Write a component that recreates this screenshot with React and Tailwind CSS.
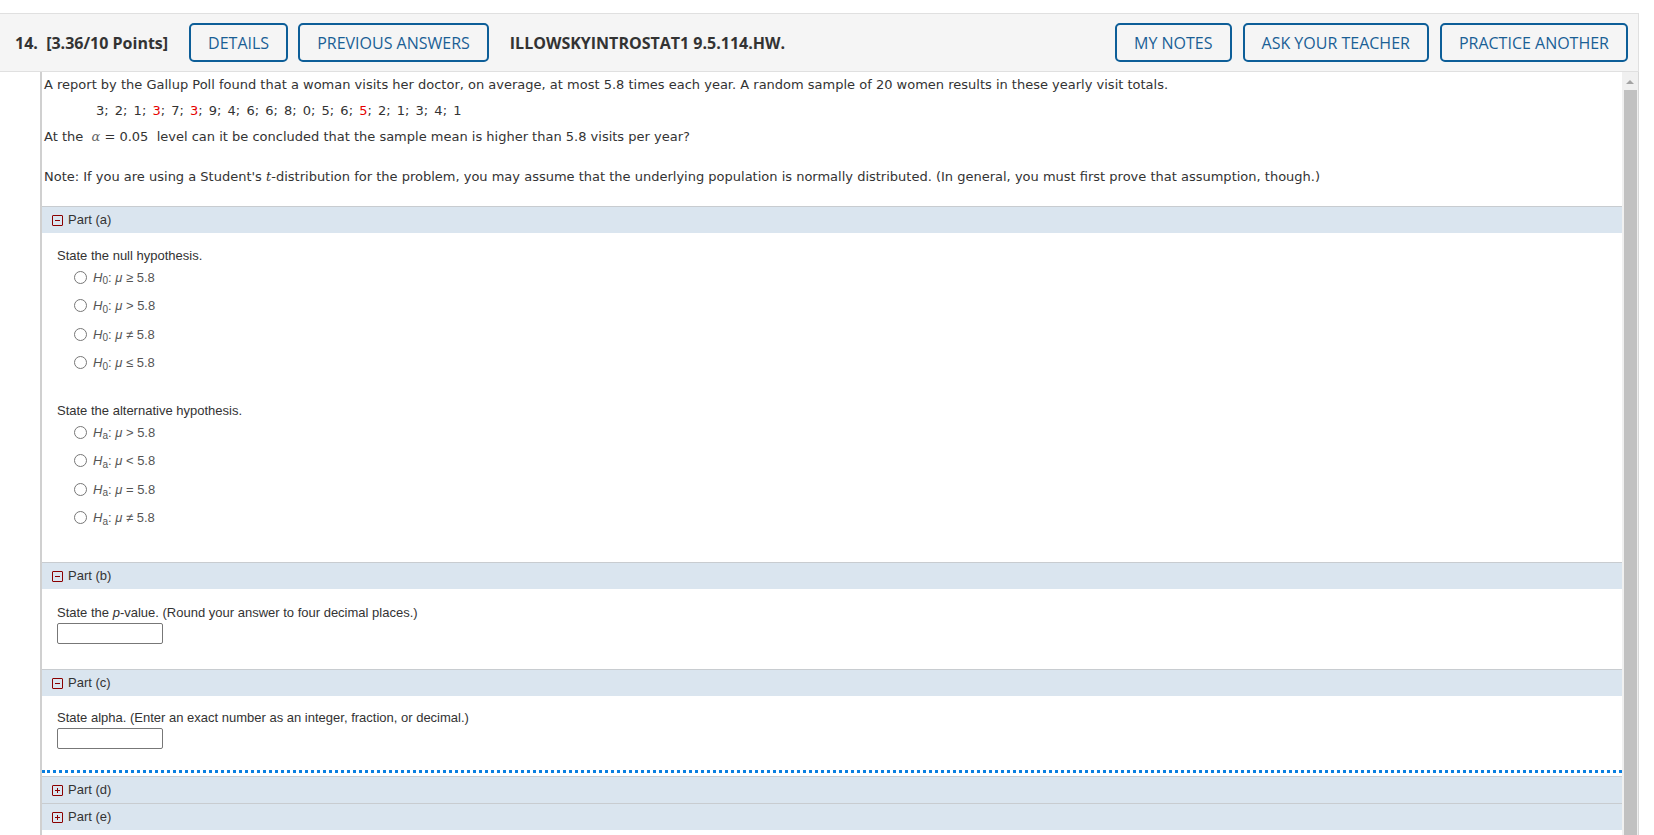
import React from "react";

const body = { fontFamily: "'DejaVu Sans', Verdana, sans-serif" };
const arial = { fontFamily: "'Liberation Sans', Arial, sans-serif" };
const open = { fontFamily: "'Open Sans', sans-serif" };

const HeadButton = ({ children }) => (
  <button
    className="h-[39px] px-[17px] border-2 border-[#0d5e98] rounded-[5px] text-[#1a5f95] text-[16px] font-medium uppercase leading-none bg-transparent"
    style={open}
  >
    {children}
  </button>
);

const Toggle = ({ open: isOpen }) => (
  <span className="relative w-[11px] h-[11px] border border-[#8b0000] rounded-[1px] flex items-center justify-center">
    <span className="absolute w-[5px] h-[1px] bg-[#8b0000]" />
    {!isOpen && <span className="absolute w-[1px] h-[5px] bg-[#8b0000]" />}
  </span>
);

const PartBar = ({ label, isOpen = true, className = "" }) => (
  <div
    className={`h-[27px] bg-[#dae5ef] border-t border-[#c8ccd0] flex items-center pl-[10px] gap-[5px] ${className}`}
  >
    <Toggle open={isOpen} />
    <span className="text-[13px] text-[#333]" style={arial}>
      {label}
    </span>
  </div>
);

const Option = ({ sub, rel }) => (
  <div className="h-[28.5px] flex items-center pl-[17px] gap-[6px]">
    <span className="w-[13px] h-[13px] rounded-full border border-[#777] bg-white" />
    <span className="text-[13px] text-[#555]" style={arial}>
      <i>H</i>
      <sub className="text-[10px]">{sub}</sub>
      : <i>μ</i> {rel} 5.8
    </span>
  </div>
);

const nullOptions = ["≥", ">", "≠", "≤"];
const altOptions = [">", "<", "=", "≠"];

const data = [3, 2, 1, 3, 7, 3, 9, 4, 6, 6, 8, 0, 5, 6, 5, 2, 1, 3, 4, 1];
const redIdx = [3, 5, 14];

export default function App() {
  return (
    <div className="w-[1654px] h-[835px] bg-white overflow-hidden pt-[13px]">
      <header className="w-[1639px] h-[59px] bg-[#f5f5f5] border-y border-r border-[#e0e0e0] flex items-center pl-[15px] pr-[10px] text-[#333]">
        <span className="text-[16px] font-bold mr-[21px]" style={open}>
          14.&nbsp; [3.36/10 Points]
        </span>
        <div className="flex gap-[10px]">
          <HeadButton>Details</HeadButton>
          <HeadButton>Previous Answers</HeadButton>
        </div>
        <span className="text-[16px] font-bold ml-[21px]" style={open}>
          ILLOWSKYINTROSTAT1 9.5.114.HW.
        </span>
        <div className="ml-auto flex gap-[11px]">
          <HeadButton>My Notes</HeadButton>
          <HeadButton>Ask Your Teacher</HeadButton>
          <HeadButton>Practice Another</HeadButton>
        </div>
      </header>

      <div className="flex w-[1639px] h-[763px]">
        <div className="w-[40px]" />
        <main className="flex-1 border-l-2 border-[#d0d0d0] text-[#333] text-[13px]" style={body}>
          <p className="leading-[20px] mt-[3px] pl-[2px]">
            A report by the Gallup Poll found that a woman visits her doctor, on average, at most 5.8 times each year. A
            random sample of 20 women results in these yearly visit totals.
          </p>
          <p className="leading-[20px] mt-[6px] pl-[54px] [word-spacing:2px]">
            {data.map((d, i) => (
              <span key={i}>
                <span className={redIdx.includes(i) ? "text-[#e60000]" : ""}>{d}</span>
                {i < data.length - 1 ? "; " : ""}
              </span>
            ))}
          </p>
          <p className="leading-[20px] mt-[6px] pl-[2px]">
            At the&nbsp; <i className="text-[#666]" style={{ fontFamily: "'DejaVu Serif', serif" }}>α</i> = 0.05&nbsp; level
            can it be concluded that the sample mean is higher than 5.8 visits per year?
          </p>
          <p className="leading-[20px] mt-[20px] pl-[2px]">
            Note: If you are using a Student's <i style={{ fontFamily: "'DejaVu Serif', serif" }}>t</i>-distribution for
            the problem, you may assume that the underlying population is normally distributed. (In general, you must
            first prove that assumption, though.)
          </p>

          <PartBar label="Part (a)" className="mt-[19px]" />
          <div className="pl-[15px] text-[13px]" style={arial}>
            <div className="leading-[15px] mt-[15px]">State the null hypothesis.</div>
            {nullOptions.map((r) => (
              <Option key={r} sub="0" rel={r} />
            ))}
            <div className="leading-[15px] mt-[26px]">State the alternative hypothesis.</div>
            {altOptions.map((r) => (
              <Option key={r} sub="a" rel={r} />
            ))}
          </div>

          <PartBar label="Part (b)" className="mt-[30px]" />
          <div className="pl-[15px] text-[13px]" style={arial}>
            <div className="leading-[15px] mt-[16px]">
              State the <i>p</i>-value. (Round your answer to four decimal places.)
            </div>
            <div className="mt-[3px] w-[106px] h-[21px] border border-[#777] rounded-[2px]" />
          </div>

          <PartBar label="Part (c)" className="mt-[25px]" />
          <div className="pl-[15px] text-[13px]" style={arial}>
            <div className="leading-[15px] mt-[14px]">
              State alpha. (Enter an exact number as an integer, fraction, or decimal.)
            </div>
            <div className="mt-[3px] w-[106px] h-[21px] border border-[#777] rounded-[2px]" />
          </div>

          <div className="mt-[21px] border-b-[3px] border-dotted border-[#0a7fe0]" />
          <PartBar label="Part (d)" isOpen={false} className="mt-[3px]" />
          <PartBar label="Part (e)" isOpen={false} />
        </main>
        <div className="w-[17px] bg-[#f0f0f0] border-r border-[#d8d8d8] flex flex-col items-center">
          <span className="mt-[8px] w-0 h-0 border-l-[4px] border-r-[4px] border-b-[4px] border-l-transparent border-r-transparent border-b-[#a3a3a3]" />
          <span className="mt-[6px] w-[13px] flex-1 bg-[#c1c1c1]" />
        </div>
      </div>
    </div>
  );
}
